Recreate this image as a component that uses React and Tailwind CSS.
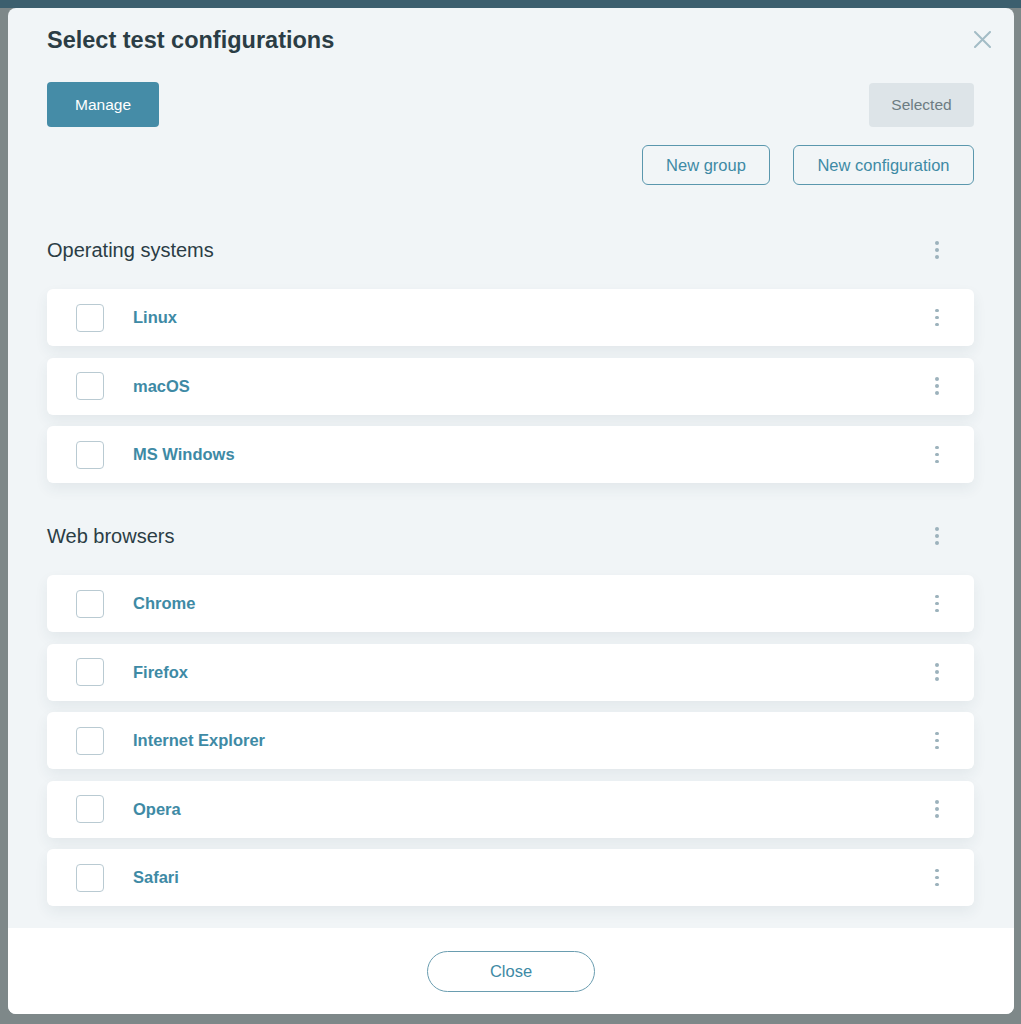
import React from "react";

const groups = [
  { name: "Operating systems", items: ["Linux", "macOS", "MS Windows"] },
  {
    name: "Web browsers",
    items: ["Chrome", "Firefox", "Internet Explorer", "Opera", "Safari"],
  },
];

const Kebab = () => (
  <button className="flex flex-col items-center gap-[3.5px] w-4 h-6 justify-center">
    <span className="block w-[3.5px] h-[3.5px] rounded-full bg-[#9cb2bc]" />
    <span className="block w-[3.5px] h-[3.5px] rounded-full bg-[#9cb2bc]" />
    <span className="block w-[3.5px] h-[3.5px] rounded-full bg-[#9cb2bc]" />
  </button>
);

const ConfigRow = ({ label }) => (
  <div className="h-[57px] flex items-center bg-white rounded-md shadow-[0_6px_14px_rgba(40,70,90,0.07)] pl-[29px] pr-[29px]">
    <span className="w-[28px] h-[28px] rounded border border-[#b9cad2] bg-white shrink-0" />
    <span className="ml-[29px] text-[16.5px] font-bold text-[#3e8aa5]">
      {label}
    </span>
    <div className="ml-auto">
      <Kebab />
    </div>
  </div>
);

const App = () => {
  return (
    <div
      className="min-h-screen w-[1021px] h-[1024px] bg-[#7e8889] border-t-8 border-[#3c5f6e] pl-2 pr-[7px] flex flex-col"
      style={{ fontFamily: '"Liberation Sans", Arial, sans-serif' }}
    >
      <div className="relative w-[1006px] h-[1006px] rounded-lg overflow-hidden bg-[#f1f5f7] flex flex-col">
        {/* close */}
        <button className="absolute top-[23px] right-[23px] text-[#a3bcc6]">
          <svg width="17" height="17" viewBox="0 0 17 17" fill="none">
            <path
              d="M1 1L16 16M16 1L1 16"
              stroke="currentColor"
              strokeWidth="2"
              strokeLinecap="round"
            />
          </svg>
        </button>

        <div className="flex-1 pl-[39px] pr-10 pt-[18px] pb-[22px]">
          <h2 className="text-[23.5px] leading-[28px] font-bold text-[#2b3d45]">
            Select test configurations
          </h2>

          <div className="mt-7 flex items-start justify-between">
            <button className="w-[112px] h-[45px] rounded bg-[#458ca7] text-white text-[15.5px]">
              Manage
            </button>
            <button className="w-[105px] h-[44px] mt-px rounded bg-[#dde4e8] text-[#6d7c82] text-[15.5px]">
              Selected
            </button>
          </div>

          <div className="mt-[18px] flex justify-end gap-[23px]">
            <button className="w-[128px] h-[40px] rounded-md border border-[#5a97ad] text-[#3e8aa5] text-[16.5px]">
              New group
            </button>
            <button className="w-[181px] h-[40px] rounded-md border border-[#5a97ad] text-[#3e8aa5] text-[16.5px]">
              New configuration
            </button>
          </div>

          {groups.map((g, gi) => (
            <div key={g.name} className={gi === 0 ? "mt-[53px]" : "mt-[41px]"}>
              <div className="flex items-center justify-between pr-[29px]">
                <h3 className="text-[20px] leading-[24px] text-[#2b3d45]">
                  {g.name}
                </h3>
                <Kebab />
              </div>
              <div className="mt-[27px] flex flex-col gap-[11.5px]">
                {g.items.map((it) => (
                  <ConfigRow key={it} label={it} />
                ))}
              </div>
            </div>
          ))}
        </div>

        {/* footer */}
        <div className="h-[86px] shrink-0 bg-white flex items-center justify-center">
          <button className="w-[168px] h-[41px] rounded-full border border-[#6a9db0] text-[#3e8aa5] text-[16.5px]">
            Close
          </button>
        </div>
      </div>
    </div>
  );
};

export default App;
